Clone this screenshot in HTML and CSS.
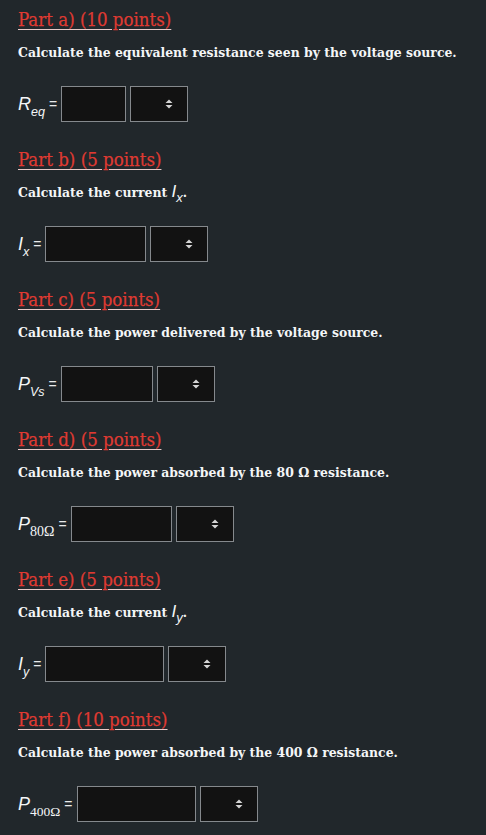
FILE: index.html
```html
<!DOCTYPE html>
<html lang="en">
<head>
<meta charset="utf-8">
<title>Circuit problem</title>
<link rel="stylesheet" href="styles.css">
</head>
<body>
<main class="page">
  <section class="part part-a">
    <h2 class="title"><span class="link">Part a) (10 points)</span></h2>
    <p class="q">Calculate the equivalent resistance seen by the voltage source.</p>
    <div class="row">
      <span class="lbl"><i class="m">R</i><sub class="ms">eq</sub></span><span class="eq">=</span>
      <span class="box w65"></span>
      <span class="sel"><svg width="8" height="10" viewBox="0 0 8 10"><path d="M0.5 4 L4 0.5 L7.5 4Z M0.5 6 L4 9.5 L7.5 6Z" fill="#d4d4d4"/></svg></span>
    </div>
  </section>

  <section class="part part-b">
    <h2 class="title"><span class="link">Part b) (5 points)</span></h2>
    <p class="q">Calculate the current <i class="mi">I</i><sub class="msi">x</sub>.</p>
    <div class="row">
      <span class="lbl"><i class="m">I</i><sub class="ms">x</sub></span><span class="eq">=</span>
      <span class="box w100"></span>
      <span class="sel"><svg width="8" height="10" viewBox="0 0 8 10"><path d="M0.5 4 L4 0.5 L7.5 4Z M0.5 6 L4 9.5 L7.5 6Z" fill="#d4d4d4"/></svg></span>
    </div>
  </section>

  <section class="part part-c">
    <h2 class="title"><span class="link">Part c) (5 points)</span></h2>
    <p class="q">Calculate the power delivered by the voltage source.</p>
    <div class="row">
      <span class="lbl"><i class="m">P</i><sub class="ms sp">Vs</sub></span><span class="eq">=</span>
      <span class="box w92"></span>
      <span class="sel"><svg width="8" height="10" viewBox="0 0 8 10"><path d="M0.5 4 L4 0.5 L7.5 4Z M0.5 6 L4 9.5 L7.5 6Z" fill="#d4d4d4"/></svg></span>
    </div>
  </section>

  <section class="part part-d">
    <h2 class="title"><span class="link">Part d) (5 points)</span></h2>
    <p class="q">Calculate the power absorbed by the 80 Ω resistance.</p>
    <div class="row">
      <span class="lbl"><i class="m">P</i><sub class="mserif">80Ω</sub></span><span class="eq">=</span>
      <span class="box w101"></span>
      <span class="sel"><svg width="8" height="10" viewBox="0 0 8 10"><path d="M0.5 4 L4 0.5 L7.5 4Z M0.5 6 L4 9.5 L7.5 6Z" fill="#d4d4d4"/></svg></span>
    </div>
  </section>

  <section class="part part-e">
    <h2 class="title"><span class="link">Part e) (5 points)</span></h2>
    <p class="q">Calculate the current <i class="mi">I</i><sub class="msi">y</sub>.</p>
    <div class="row">
      <span class="lbl"><i class="m">I</i><sub class="ms">y</sub></span><span class="eq">=</span>
      <span class="box w119"></span>
      <span class="sel"><svg width="8" height="10" viewBox="0 0 8 10"><path d="M0.5 4 L4 0.5 L7.5 4Z M0.5 6 L4 9.5 L7.5 6Z" fill="#d4d4d4"/></svg></span>
    </div>
  </section>

  <section class="part part-f">
    <h2 class="title"><span class="link">Part f) (10 points)</span></h2>
    <p class="q">Calculate the power absorbed by the 400 Ω resistance.</p>
    <div class="row">
      <span class="lbl"><i class="m">P</i><sub class="mserif sp">400Ω</sub></span><span class="eq">=</span>
      <span class="box w119"></span>
      <span class="sel"><svg width="8" height="10" viewBox="0 0 8 10"><path d="M0.5 4 L4 0.5 L7.5 4Z M0.5 6 L4 9.5 L7.5 6Z" fill="#d4d4d4"/></svg></span>
    </div>
  </section>
</main>
</body>
</html>
```

FILE: styles.css
```css
html, body {
  margin: 0;
  padding: 0;
  background: #21272b;
}

.page {
  padding: 8px 18px 0 18px;
  color: #f2f4f5;
}

.part {
  height: 140px;
}

.title {
  margin: 0;
  font-family: "DejaVu Serif", "Liberation Serif", serif;
  font-stretch: condensed;
  font-weight: normal;
  font-size: 18.5px;
  line-height: 24px;
  -webkit-text-stroke: 0.25px #df3a32;
}

.link {
  color: #df3a32;
  text-decoration: underline;
  text-decoration-color: #e7c9c7;
  text-decoration-thickness: 1px;
  text-underline-offset: 3px;
}

.q {
  margin: 10px 0 0 0;
  font-family: "DejaVu Serif", "Liberation Serif", serif;
  font-stretch: condensed;
  font-weight: bold;
  font-size: 13.8px;
  line-height: 20px;
  color: #f4f6f7;
}

.mi {
  font-family: "Liberation Sans", Arial, sans-serif;
  font-weight: normal;
  font-size: 17px;
}

.msi {
  font-family: "Liberation Sans", Arial, sans-serif;
  font-style: italic;
  font-weight: normal;
  font-size: 13px;
  vertical-align: -5px;
  line-height: 0;
}

.row {
  margin-top: 24px;
  display: flex;
  align-items: center;
  height: 36px;
}

.lbl {
  font-family: "Liberation Sans", Arial, sans-serif;
  color: #f4f6f7;
  line-height: 20px;
  white-space: nowrap;
}

.m {
  font-size: 18px;
}

.ms {
  font-family: "Liberation Sans", Arial, sans-serif;
  font-style: italic;
  font-size: 12.5px;
  vertical-align: -6px;
  line-height: 0;
}

.ms.sp {
  margin-left: 0;
}

.mserif {
  font-family: "Liberation Serif", "Times New Roman", serif;
  font-size: 14px;
  vertical-align: -6px;
  line-height: 0;
}

.mserif.sp {
  font-size: 13.5px;
  margin-left: 0;
}

.eq {
  font-family: "Liberation Sans", Arial, sans-serif;
  font-size: 14px;
  color: #e8eaeb;
  margin: 0 4px 0 4px;
}

.box {
  box-sizing: border-box;
  height: 36px;
  background: #121212;
  border: 1px solid #85898d;
}

.w65 { width: 65px; }
.w92 { width: 92px; }
.w100 { width: 101px; }
.w101 { width: 101px; }
.w119 { width: 119px; }

.sel {
  box-sizing: border-box;
  width: 58px;
  height: 36px;
  margin-left: 4px;
  background: #121212;
  border: 1px solid #85898d;
  display: flex;
  align-items: center;
  justify-content: flex-end;
  padding-right: 14px;
}

.sel svg {
  display: block;
}
```
